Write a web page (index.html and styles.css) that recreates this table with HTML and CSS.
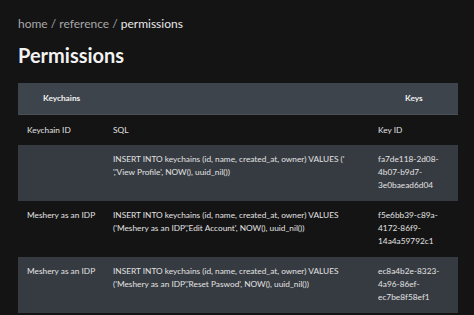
FILE: index.html
```html
<!DOCTYPE html>
<html lang="en">
<head>
    <meta charset="UTF-8">
    <meta name="viewport" content="width=device-width, initial-scale=1.0">
    <title>Permissions</title>
    <link rel="stylesheet" href="styles.css">
</head>
<body>
    <div class="page">
        <div class="breadcrumb">
            <span class="crumb">home</span> / <span class="crumb">reference</span> / <span class="crumb-current">permissions</span>
        </div>
        <h1 class="title">Permissions</h1>

        <table class="perm-table">
            <colgroup>
                <col class="col-id">
                <col class="col-sql">
                <col class="col-key">
            </colgroup>
            <thead>
                <tr class="group-row">
                    <th colspan="2" class="group-keychains">Keychains</th>
                    <th class="group-keys">Keys</th>
                </tr>
            </thead>
            <tbody>
                <tr class="sub-row">
                    <td>Keychain ID</td>
                    <td>SQL</td>
                    <td>Key ID</td>
                </tr>
                <tr class="stripe">
                    <td></td>
                    <td>INSERT INTO keychains (id, name, created_at, owner) VALUES ('<wbr>','View Profile', NOW(), uuid_nil())</td>
                    <td>fa7de118-2d08-4b07-b9d7-3e0baead6d04</td>
                </tr>
                <tr>
                    <td>Meshery as an IDP</td>
                    <td>INSERT INTO keychains (id, name, created_at, owner) VALUES ('Meshery as an IDP','Edit Account', NOW(), uuid_nil())</td>
                    <td>f5e6bb39-c89a-4172-86f9-14a4a59792c1</td>
                </tr>
                <tr class="stripe">
                    <td>Meshery as an IDP</td>
                    <td>INSERT INTO keychains (id, name, created_at, owner) VALUES ('Meshery as an IDP','Reset Paswod', NOW(), uuid_nil())</td>
                    <td>ec8a4b2e-8323-4a96-86ef-ec7be8f58ef1</td>
                </tr>
            </tbody>
        </table>
    </div>
</body>
</html>
```

FILE: styles.css
```css
body {
    font-family: 'Lato', 'Open Sans', sans-serif;
    background-color: #141414;
    color: #e6e6e6;
    margin: 0;
    padding: 0;
}
.page {
    padding: 16px 16px 0 18px;
}
.breadcrumb {
    font-size: 12px;
    line-height: 16px;
    color: #a8a8a8;
}
.crumb-current {
    color: #e8e8e8;
}
.title {
    font-size: 20px;
    font-weight: 700;
    line-height: 24px;
    margin: 11px 0 16px;
    color: #f2f2f2;
}
.perm-table {
    width: 440px;
    border-collapse: collapse;
    table-layout: fixed;
    font-size: 8.3px;
    line-height: 13px;
}
.col-id {
    width: 86px;
}
.col-sql {
    width: 265px;
}
.col-key {
    width: 89px;
}
.perm-table th {
    background: #3d444c;
    font-weight: 700;
    color: #f0f0f0;
    text-align: left;
    height: 31px;
    padding: 0;
    border-bottom: 1px solid #4a5058;
}
.group-keychains {
    padding-left: 25px !important;
}
.group-keys {
    padding-left: 36px !important;
}
.perm-table td {
    padding: 8px 9px 9px;
    vertical-align: top;
    color: #e2e2e2;
    word-wrap: break-word;
}
.perm-table td:first-child {
    padding-right: 0;
    white-space: nowrap;
}
.sub-row td {
    padding: 9px 9px 8px;
}
.stripe td {
    background: #363b41;
}
```
